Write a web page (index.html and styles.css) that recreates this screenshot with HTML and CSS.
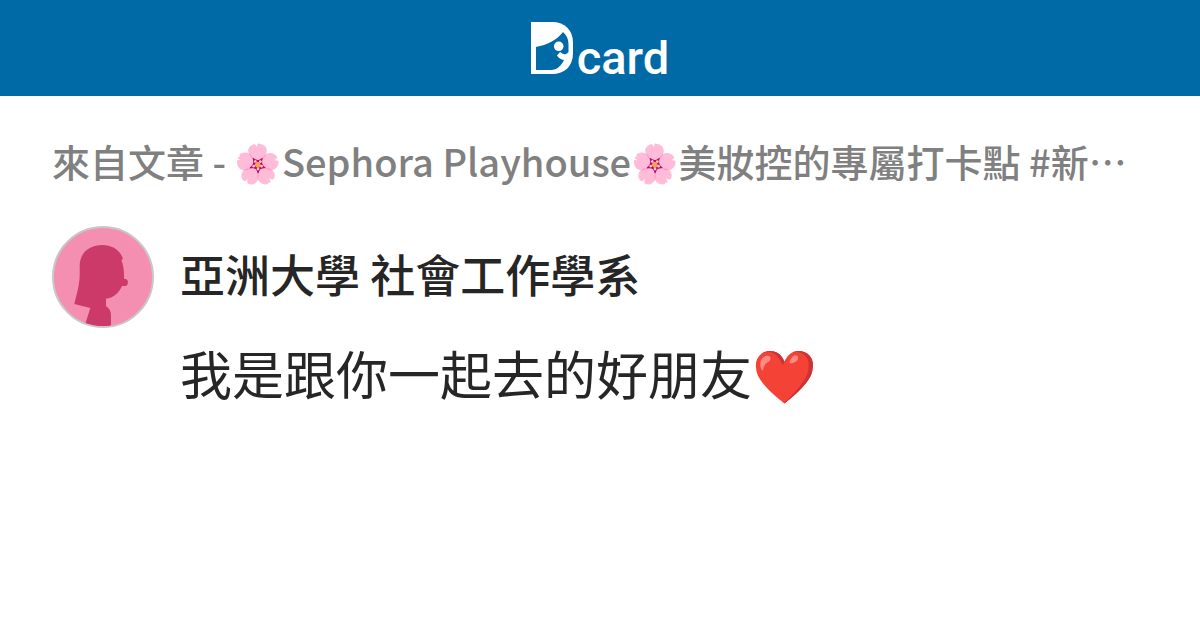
FILE: index.html
```html
<!DOCTYPE html>
<html lang="zh-Hant">
<head>
<meta charset="utf-8">
<meta name="viewport" content="width=device-width, initial-scale=1">
<title>Dcard</title>
<link rel="stylesheet" href="styles.css">
</head>
<body>
<header class="topbar">
  <div class="logo">
    <svg class="logo-mark" viewBox="0 0 42 52" role="img" aria-label="D">
      <path fill="#fff" d="M0 0H21C34 0 42 8 42 21V31C42 44 34 52 21 52H0Z"/>
      <path fill="#006aa6" d="M5 25C16 23 26 18 32 10C35.500 13 37.500 17 37.500 22V30C35 33 33 32.500 31.500 31.500L29 30L26 33.500C27.500 36 30 37.500 33 38C30 44 26 48 20 48H5Z"/>
      <circle fill="#fff" cx="27.700" cy="24.300" r="4.800"/>
    </svg>
    <span class="logo-word">card</span>
  </div>
</header>
<main class="content">
  <p class="source">來自文章 - 🌸Sephora Playhouse🌸美妝控的專屬打卡點 #新…</p>
  <article class="comment">
    <svg class="avatar" viewBox="0 0 102 102" aria-hidden="true">
      <defs><clipPath id="face"><circle cx="51" cy="51" r="49.5"/></clipPath></defs>
      <circle fill="#f48fb1" cx="51" cy="51" r="50"/>
      <g fill="#cc3a6a" clip-path="url(#face)">
        <path d="M22.3 78C25 67 27.7 58 27.7 48V40C27.7 27 37 19 50.5 19C60 19 68 24 71 32.700L69.3 34.3C71.5 39 72.3 46 72 53L70 60C67 67 61 72 54 72.7V80C57 82 59 85 59 89V102H32L38.3 82Z"/>
        <circle cx="72.2" cy="56.4" r="3.7"/>
      </g>
      <circle fill="none" stroke="#c8c8c8" stroke-width="2" cx="51" cy="51" r="50"/>
    </svg>
    <div class="comment-body">
      <h1 class="author">亞洲大學 社會工作學系</h1>
      <p class="message">我是跟你一起去的好朋友❤️</p>
    </div>
  </article>
</main>
</body>
</html>
```
FILE: styles.css
```css
* {
  box-sizing: border-box;
}

body {
  margin: 0;
  background: #fff;
  color: #262626;
  font-family: "Noto Sans CJK TC", "Noto Color Emoji", sans-serif;
}

.topbar {
  display: flex;
  justify-content: center;
  padding: 22px 0;
  background: #006aa6;
}

.logo {
  display: flex;
  align-items: flex-end;
  gap: 4px;
  color: #fff;
}

.logo-mark {
  width: 42px;
  height: 52px;
}

.logo-word {
  font: 500 47px/32px Roboto, sans-serif;
}

.content {
  padding: 36px 52px;
}

.source {
  margin: 0;
  overflow: hidden;
  color: #808080;
  font-size: 38px;
  font-weight: 500;
  line-height: 58px;
  text-overflow: ellipsis;
  white-space: nowrap;
}

.comment {
  display: flex;
  align-items: flex-start;
  gap: 26px;
  margin-top: 36px;
}

.avatar {
  flex: none;
  width: 102px;
  height: 102px;
}

.comment-body {
  min-width: 0;
}

.author {
  margin: 0;
  font-size: 45px;
  font-weight: 500;
  line-height: 96px;
}

.message {
  margin: 12px 0 0;
  font-size: 52px;
  line-height: 78px;
}
```
